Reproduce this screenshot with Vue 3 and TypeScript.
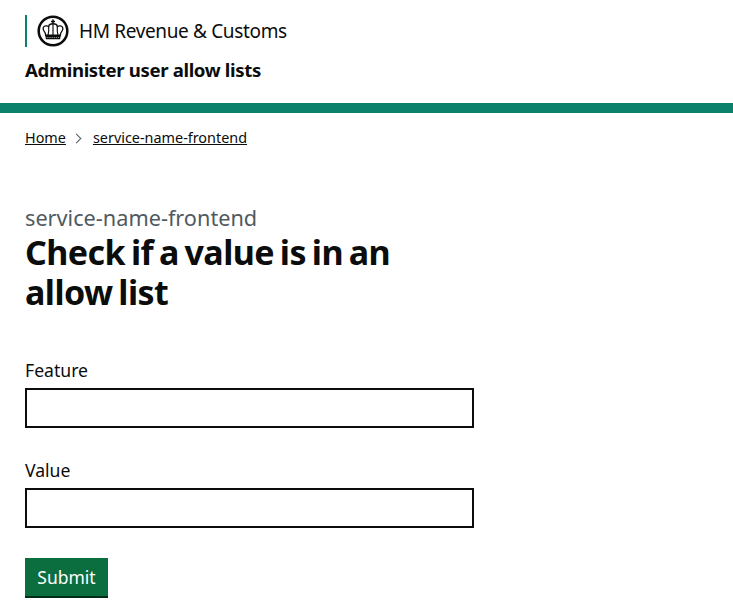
<script setup lang="ts">
const crumbs: string[] = ['Home', 'service-name-frontend']
</script>

<template>
  <div class="page">
    <header class="header">
      <div class="org">
        <svg class="crest" viewBox="0 0 34 34" width="32" height="32" aria-hidden="true">
          <circle cx="17" cy="17" r="15.2" fill="none" stroke="#0b0c0c" stroke-width="2.700" />
          <path d="M16.200 4.800h1.600v1.300h1.300v1.500h-1.300v1.700h-1.600V7.600h-1.300V6.100h1.300z" fill="#0b0c0c" />
          <path d="M17 9.300c-2.800 0-4.300 1.200-4.600 2.900-2-1.300-5.300-.8-5.900 1.800-.4 1.900.8 3.300 2.200 5.100l.5 2.400h15.600l.5-2.400c1.400-1.800 2.600-3.200 2.200-5.100-.6-2.600-3.900-3.100-5.900-1.800-.3-1.700-1.800-2.900-4.600-2.900z" fill="none" stroke="#0b0c0c" stroke-width="1.400" />
          <path d="M17 9.300V21.500M12.400 12.200c.3 3 .1 6-.7 9.300M21.600 12.200c-.3 3-.1 6 .7 9.300" fill="none" stroke="#0b0c0c" stroke-width="1.200" />
          <path d="M8.800 22h16.400l-.7 3.800H9.500z" fill="#0b0c0c" />
          <path d="M10.300 23.900h13.400" stroke="#fff" stroke-width=".7" stroke-dasharray="1 1" />
        </svg>
        <span class="org-name">HM Revenue &amp; Customs</span>
      </div>
      <a class="service" href="#">Administer user allow lists</a>
    </header>
    <div class="rule"></div>
    <main class="main">
      <nav class="crumbs">
        <template v-for="(c, i) in crumbs" :key="c">
          <span v-if="i > 0" class="chev"></span>
          <a href="#">{{ c }}</a>
        </template>
      </nav>
      <span class="caption">service-name-frontend</span>
      <h1 class="title">Check if a value is in an allow list</h1>
      <form class="form" @submit.prevent>
        <label class="field">
          <span class="label">Feature</span>
          <input class="input" type="text" />
        </label>
        <label class="field">
          <span class="label">Value</span>
          <input class="input" type="text" />
        </label>
        <button class="submit" type="submit">Submit</button>
      </form>
    </main>
  </div>
</template>

<style>
html, body { margin: 0; background: #fff; }
</style>

<style scoped>
.page {
  font-family: "Noto Sans", "Liberation Sans", sans-serif;
  color: #0b0c0c;
  height: 604px;
  overflow: hidden;
}
.header { padding: 15px 25px 0; height: 103px; box-sizing: border-box; }
.org {
  display: flex;
  align-items: center;
  height: 32px;
  border-left: 2px solid #0b806b;
  padding-left: 10px;
  gap: 10px;
}
.crest { flex: none; }
.org-name { font-size: 19px; line-height: 32px; letter-spacing: -0.35px; }
.service {
  display: block;
  margin-top: 10px;
  font-size: 18.600px;
  line-height: 26px;
  font-weight: 700;
  color: #0b0c0c;
  text-decoration: none;
  letter-spacing: -0.35px;
}
.rule { height: 10px; background: #0b806b; }
.main { padding: 0 25px; }
.crumbs {
  display: flex;
  align-items: center;
  height: 20px;
  margin-top: 15px;
  font-size: 14.400px;
  line-height: 20px;
}
.crumbs a { color: #0b0c0c; }
.chev {
  width: 6px;
  height: 6px;
  margin: 0 13px 0 7px;
  border-top: 1px solid #505a5f;
  border-right: 1px solid #505a5f;
  transform: rotate(45deg);
}
.caption {
  display: block;
  margin-top: 57px;
  font-size: 21.700px;
  line-height: 25px;
  color: #505a5f;
}
.title {
  margin: 2px 0 0;
  width: 420px;
  font-size: 34px;
  line-height: 40px;
  font-weight: 700;
  letter-spacing: -0.55px;
  word-spacing: -2.500px;
}
.form { margin-top: 46px; width: 449px; }
.field { display: block; margin-bottom: 30px; }
.label { display: block; font-size: 17.600px; line-height: 25px; margin-bottom: 5px; }
.input {
  display: block;
  width: 100%;
  height: 40px;
  box-sizing: border-box;
  border: 2px solid #0b0c0c;
  border-radius: 0;
  background: #fff;
  padding: 5px;
  font: inherit;
}
.submit {
  display: block;
  height: 40px;
  width: 83px;
  padding: 0;
  border: 0;
  border-bottom: 2px solid #002d18;
  border-radius: 0;
  background: #0b6e3f;
  color: #fff;
  font: inherit;
  font-size: 17.500px;
  box-sizing: border-box;
}
</style>
